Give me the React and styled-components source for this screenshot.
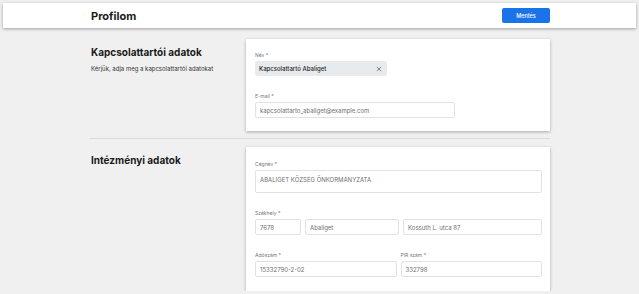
import React from 'react';
import styled, { createGlobalStyle } from 'styled-components';

const GlobalStyle = createGlobalStyle`
  html, body {
    margin: 0;
    padding: 0;
    background: #f0f0f0;
    font-family: Inter, "Noto Sans", sans-serif;
    color: #1a1a1a;
  }
`;

const Page = styled.div`
  padding: 3px 3px 0;
`;

const Header = styled.header`
  background: #fff;
  height: 25px;
  box-shadow: 0 1px 3px rgba(0, 0, 0, 0.35);
  display: flex;
  justify-content: center;
`;

const HeaderInner = styled.div`
  width: 461px;
  display: flex;
  align-items: center;
  justify-content: space-between;
  padding-left: 2px;
  box-sizing: border-box;
`;

const PageTitle = styled.h1`
  margin: 0;
  font-size: 11px;
  font-weight: 700;
`;

const SaveButton = styled.button`
  width: 48px;
  height: 15px;
  border: none;
  border-radius: 2px;
  background: #1a73e8;
  color: #fff;
  font-family: inherit;
  font-size: 5.5px;
  font-weight: 500;
  padding: 0;
`;

const Main = styled.main`
  width: 461px;
  margin: 0 auto;
  padding-top: 11px;
`;

const Section = styled.section`
  display: flex;
`;

const Intro = styled.div`
  width: 157px;
  padding: 7px 0 0 2px;
  box-sizing: border-box;
`;

const SectionTitle = styled.h2`
  margin: 0;
  font-size: 10px;
  font-weight: 700;
`;

const SectionText = styled.p`
  margin: 7px 0 0;
  font-size: 6px;
  color: #333;
`;

const Card = styled.div`
  width: 304px;
  background: #fff;
  box-shadow: 0 1px 3px rgba(0, 0, 0, 0.3);
  padding: ${p => p.$pad};
  box-sizing: border-box;
  display: flex;
  flex-direction: column;
  gap: ${p => p.$gap};
`;

const Divider = styled.hr`
  border: none;
  border-top: 1px solid #dcdcdc;
  margin: 7px 0 8px;
`;

const Row = styled.div`
  display: flex;
  gap: 4px;
`;

const Field = styled.div`
  display: flex;
  flex-direction: column;
  flex: ${p => (p.$grow ? 1 : 'none')};
`;

const Label = styled.label`
  font-size: 5px;
  color: #777;
  height: 6px;
  line-height: 6px;
  margin-bottom: 3px;
`;

const Input = styled.div`
  height: ${p => p.$h || '16px'};
  width: ${p => p.$w || 'auto'};
  box-sizing: border-box;
  border: 1px solid #e2e2e2;
  border-radius: 2px;
  background: #fff;
  font-size: 6px;
  color: #707070;
  padding: ${p => (p.$top ? '5px 4px 0' : '0 4px')};
  display: flex;
  align-items: ${p => (p.$top ? 'flex-start' : 'center')};
`;

const Chip = styled.div`
  width: 132px;
  height: 15px;
  box-sizing: border-box;
  border-radius: 2px;
  background: #e8ebee;
  font-size: 6px;
  font-weight: 500;
  color: #1f1f1f;
  padding: 0 5px 0 4px;
  display: flex;
  align-items: center;
  justify-content: space-between;
`;

const ClearIcon = () => (
  <svg width="6" height="6" viewBox="0 0 10 10">
    <path d="M1.5 1.5 L8.5 8.5 M8.5 1.5 L1.5 8.5" stroke="#666" strokeWidth="1.3" />
  </svg>
);

export default function App() {
  return (
    <Page>
      <GlobalStyle />
      <Header>
        <HeaderInner>
          <PageTitle>Profilom</PageTitle>
          <SaveButton>Mentés</SaveButton>
        </HeaderInner>
      </Header>
      <Main>
        <Section>
          <Intro>
            <SectionTitle>Kapcsolattartói adatok</SectionTitle>
            <SectionText>Kérjük, adja meg a kapcsolattartói adatokat</SectionText>
          </Intro>
          <Card $pad="13px 9px 13px" $gap="17px">
            <Field>
              <Label>Név *</Label>
              <Chip>
                Kapcsolattartó Abaliget
                <ClearIcon />
              </Chip>
            </Field>
            <Field>
              <Label>E-mail *</Label>
              <Input $w="200px">kapcsolattarto_abaliget@example.com</Input>
            </Field>
          </Card>
        </Section>
        <Divider />
        <Section>
          <Intro>
            <SectionTitle>Intézményi adatok</SectionTitle>
          </Intro>
          <Card $pad="14px 8px 14px 9px" $gap="17px">
            <Field>
              <Label>Cégnév *</Label>
              <Input $h="23px" $top>ABALIGET KÖZSÉG ÖNKORMÁNYZATA</Input>
            </Field>
            <Field>
              <Label>Székhely *</Label>
              <Row>
                <Input $w="46px">7678</Input>
                <Input $w="94px">Abaliget</Input>
                <Field $grow>
                  <Input>Kossuth L. utca 87</Input>
                </Field>
              </Row>
            </Field>
            <Row>
              <Field $grow>
                <Label>Adószám *</Label>
                <Input>15332790-2-02</Input>
              </Field>
              <Field $grow>
                <Label>PIR szám *</Label>
                <Input>332798</Input>
              </Field>
            </Row>
          </Card>
        </Section>
      </Main>
    </Page>
  );
}
